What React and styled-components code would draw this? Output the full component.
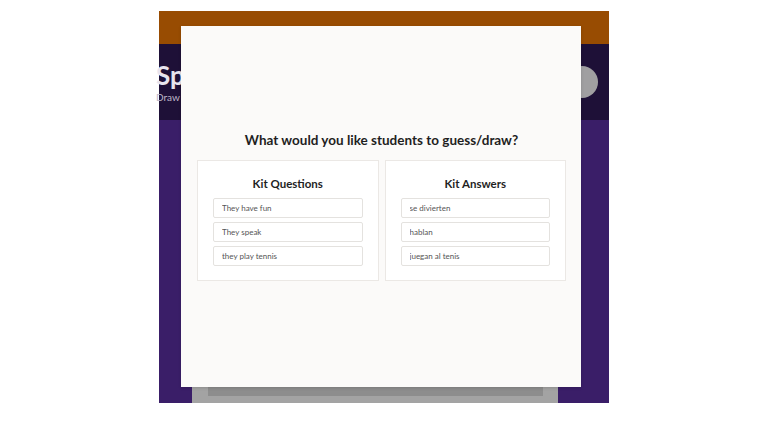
import React from 'react';
import styled, { createGlobalStyle } from 'styled-components';

const GlobalStyle = createGlobalStyle`
  html, body {
    margin: 0;
    padding: 0;
    background: #ffffff;
    font-family: Lato, "Open Sans", sans-serif;
  }
`

const Page = styled.div`
  width: 768px;
  height: 432px;
  padding-top: 11px;
  box-sizing: border-box;
  display: flex;
  justify-content: center;
`

const Frame = styled.div`
  position: relative;
  width: 450px;
  height: 392px;
  display: flex;
  flex-direction: column;
`

const Banner = styled.div`
  height: 33px;
  box-sizing: border-box;
  padding-top: 7px;
  flex-shrink: 0;
  background: #984c02;
  color: rgba(240, 200, 160, 0.6);
  font-size: 13px;
  font-weight: 700;
  display: flex;
  align-items: center;
  justify-content: center;
`

const Header = styled.div`
  height: 76px;
  flex-shrink: 0;
  background: #1e1037;
  display: flex;
  align-items: center;
  justify-content: space-between;
  padding: 0 11px 0 0;
`

const Brand = styled.div`
  margin-left: -3px;
  color: #e8e4ee;
`

const BrandTitle = styled.div`
  font-size: 26px;
  font-weight: 700;
  line-height: 26px;
`

const BrandSub = styled.div`
  margin-top: 3px;
  font-size: 10px;
  line-height: 12px;
  color: #bdb6c8;
`

const Avatar = styled.div`
  width: 32px;
  height: 32px;
  border-radius: 50%;
  background: #a09fa1;
`

const Body = styled.div`
  flex: 1;
  background: #3a1e68;
  display: flex;
  flex-direction: column;
  justify-content: flex-end;
  padding: 0 51px 0 33px;
`

const Board = styled.div`
  height: 230px;
  background: #a3a3a3;
  padding: 0 15px 7px 16px;
  display: flex;
  flex-direction: column;
  justify-content: flex-end;
`

const BoardInner = styled.div`
  height: 200px;
  background: #8d8d8d;
`

const Modal = styled.div`
  position: absolute;
  left: 22px;
  top: 15px;
  width: 400px;
  height: 361px;
  box-sizing: border-box;
  background: #fbfaf9;
  padding: 104px 15px 0 16px;
  box-shadow: 0 1px 3px rgba(0, 0, 0, 0.15);
`

const Heading = styled.h2`
  margin: 0 0 10px;
  text-align: center;
  font-size: 13.5px;
  line-height: 20px;
  font-weight: 700;
  color: #1f1f1f;
`

const Columns = styled.div`
  display: grid;
  grid-template-columns: 1fr 1fr;
  gap: 6px;
`

const Card = styled.div`
  background: #ffffff;
  border: 1px solid #ebe8e5;
  padding: 15px 15px 14px;
  display: flex;
  flex-direction: column;
  gap: 4px;
`

const CardTitle = styled.div`
  text-align: center;
  font-size: 11.5px;
  line-height: 16px;
  font-weight: 700;
  color: #1f1f1f;
  margin-bottom: 2px;
`

const Field = styled.input`
  height: 20px;
  box-sizing: border-box;
  border: 1px solid #e4e2df;
  border-radius: 2px;
  background: #ffffff;
  padding: 0 8px;
  font-family: inherit;
  font-size: 8px;
  color: #555555;
  outline: none;
`

const questions = ['They have fun', 'They speak', 'they play tennis'];
const answers = ['se divierten', 'hablan', 'juegan al tenis'];

const KitColumn = ({ title, items }) => (
  <Card>
    <CardTitle>{title}</CardTitle>
    {items.map((item) => (
      <Field key={item} defaultValue={item} />
    ))}
  </Card>
);

export default function App() {
  return (
    <>
      <GlobalStyle />
      <Page>
        <Frame>
          <Banner>Join the game and sketch your answers in Spanish!</Banner>
          <Header>
            <Brand>
              <BrandTitle>Spanish Sketch</BrandTitle>
              <BrandSub>Draw to learn</BrandSub>
            </Brand>
            <Avatar />
          </Header>
          <Body>
            <Board>
              <BoardInner />
            </Board>
          </Body>
          <Modal>
            <Heading>What would you like students to guess/draw?</Heading>
            <Columns>
              <KitColumn title="Kit Questions" items={questions} />
              <KitColumn title="Kit Answers" items={answers} />
            </Columns>
          </Modal>
        </Frame>
      </Page>
    </>
  );
}
